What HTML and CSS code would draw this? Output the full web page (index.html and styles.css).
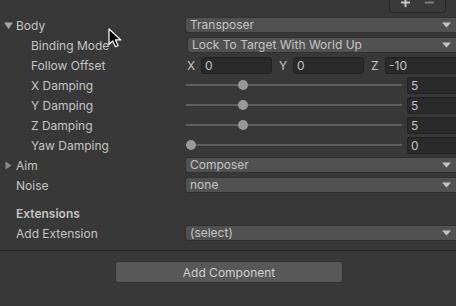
FILE: index.html
```html
<!DOCTYPE html>
<html lang="en">
<head>
  <meta charset="UTF-8" />
  <title>Cinemachine Virtual Camera</title>
  <link rel="stylesheet" href="styles.css">
</head>
<body>
  <div class="inspector">
    <div class="top">
      <div class="plusminus">
        <svg width="11" height="7" viewBox="0 0 11 7"><path d="M1 2.5h9M5.5 0v7" stroke="#c4c4c4" stroke-width="2"/></svg>
        <svg width="11" height="7" viewBox="0 0 11 7"><path d="M1 2.5h9" stroke="#7c7c7c" stroke-width="2"/></svg>
      </div>
    </div>

    <div class="row">
      <div class="label top-label">
        <svg class="fold" width="9" height="9" viewBox="0 0 9 9"><path d="M0 1.5h9L4.5 8z" fill="#a5a5a5"/></svg>
        Body
      </div>
      <div class="field">
        <div class="dropdown">Transposer<svg class="arrow" width="9" height="6" viewBox="0 0 9 6"><path d="M0 0.5h9L4.5 5.5z" fill="#c4c4c4"/></svg></div>
      </div>
    </div>

    <div class="row">
      <div class="label sub">Binding Mode</div>
      <div class="field">
        <div class="dropdown">Lock To Target With World Up<svg class="arrow" width="9" height="6" viewBox="0 0 9 6"><path d="M0 0.5h9L4.5 5.5z" fill="#c4c4c4"/></svg></div>
      </div>
    </div>

    <div class="row">
      <div class="label sub">Follow Offset</div>
      <div class="field vec">
        <div class="axis"><span class="axis-name">X</span><div class="input">0</div></div>
        <div class="axis"><span class="axis-name">Y</span><div class="input">0</div></div>
        <div class="axis"><span class="axis-name">Z</span><div class="input">-10</div></div>
      </div>
    </div>

    <div class="row">
      <div class="label sub">X Damping</div>
      <div class="field">
        <div class="slider"><div class="range"><div class="thumb" style="left: 25%"></div></div></div>
        <div class="input num">5</div>
      </div>
    </div>

    <div class="row">
      <div class="label sub">Y Damping</div>
      <div class="field">
        <div class="slider"><div class="range"><div class="thumb" style="left: 25%"></div></div></div>
        <div class="input num">5</div>
      </div>
    </div>

    <div class="row">
      <div class="label sub">Z Damping</div>
      <div class="field">
        <div class="slider"><div class="range"><div class="thumb" style="left: 25%"></div></div></div>
        <div class="input num">5</div>
      </div>
    </div>

    <div class="row">
      <div class="label sub">Yaw Damping</div>
      <div class="field">
        <div class="slider"><div class="range"><div class="thumb" style="left: 0%"></div></div></div>
        <div class="input num">0</div>
      </div>
    </div>

    <div class="row">
      <div class="label top-label">
        <svg class="fold" width="9" height="9" viewBox="0 0 9 9"><path d="M1.5 0.5v8l6-4z" fill="#8a8a8a"/></svg>
        Aim
      </div>
      <div class="field">
        <div class="dropdown">Composer<svg class="arrow" width="9" height="6" viewBox="0 0 9 6"><path d="M0 0.5h9L4.5 5.5z" fill="#c4c4c4"/></svg></div>
      </div>
    </div>

    <div class="row">
      <div class="label top-label plain">Noise</div>
      <div class="field">
        <div class="dropdown">none<svg class="arrow" width="9" height="6" viewBox="0 0 9 6"><path d="M0 0.5h9L4.5 5.5z" fill="#c4c4c4"/></svg></div>
      </div>
    </div>

    <div class="row section">
      <div class="label top-label plain bold">Extensions</div>
    </div>

    <div class="row">
      <div class="label top-label plain">Add Extension</div>
      <div class="field">
        <div class="dropdown">(select)<svg class="arrow" width="9" height="6" viewBox="0 0 9 6"><path d="M0 0.5h9L4.5 5.5z" fill="#c4c4c4"/></svg></div>
      </div>
    </div>

    <div class="footer">
      <button class="add-btn">Add Component</button>
    </div>
  </div>

  <svg class="cursor" width="14" height="20" viewBox="0 0 14 20">
    <path d="M1 1v15.5l3.8-3.6 2.6 5.8 2.6-1.1-2.6-5.7h5.4z" fill="#000" stroke="#fff" stroke-width="1.2" stroke-linejoin="round"/>
  </svg>
</body>
</html>
```

FILE: styles.css
```css
* {
  margin: 0;
  padding: 0;
  box-sizing: border-box;
}

body {
  width: 456px;
  height: 306px;
  overflow: hidden;
  background: #383838;
  font-family: Inter, 'Liberation Sans', sans-serif;
  font-size: 12px;
  color: #c4c4c4;
  position: relative;
}

.top {
  height: 15px;
  display: flex;
  justify-content: flex-end;
  padding-right: 10px;
}

.plusminus {
  width: 57px;
  height: 13px;
  border: 1px solid #252525;
  border-top: none;
  border-radius: 0 0 4px 4px;
  background: #3a3a3a;
  display: flex;
  justify-content: space-between;
  align-items: flex-start;
  padding: 0 10px 0 10px;
}

.row {
  height: 20px;
  display: flex;
  align-items: center;
}

.label {
  width: 187px;
  flex-shrink: 0;
  white-space: nowrap;
}

.top-label {
  width: 185px;
  display: flex;
  align-items: center;
  padding-left: 4px;
}

.top-label.plain {
  padding-left: 16px;
}

.fold {
  margin-right: 3px;
}

.sub {
  padding-left: 31px;
}

.bold {
  font-weight: 600;
}

.section {
  margin-top: 8px;
}

.field {
  flex: 1;
  display: flex;
  align-items: center;
  min-width: 0;
}

.dropdown {
  flex: 1;
  height: 16px;
  background: #515151;
  border: 1px solid #303030;
  border-right: none;
  border-radius: 3px 0 0 3px;
  display: flex;
  align-items: center;
  justify-content: space-between;
  padding-left: 4px;
  padding-right: 5px;
  line-height: 14px;
}

.arrow {
  flex-shrink: 0;
}

.vec {
  gap: 7px;
}

.axis {
  flex: 1;
  display: flex;
  align-items: center;
}

.axis-name {
  width: 14px;
  flex-shrink: 0;
}

.input {
  flex: 1;
  height: 17px;
  background: #2a2a2a;
  border: 1px solid #212121;
  border-radius: 3px;
  padding-left: 3px;
  line-height: 15px;
}

.axis:last-child .input {
  border-right: none;
  border-radius: 3px 0 0 3px;
}

.slider {
  flex: 1;
  height: 2px;
  background: #5e5e5e;
  margin: 0 5px 0 -1px;
  position: relative;
}

.range {
  position: absolute;
  left: 0;
  right: 10px;
  top: 0;
  height: 2px;
}

.thumb {
  position: absolute;
  top: -4px;
  width: 10px;
  height: 10px;
  border-radius: 50%;
  background: #999999;
}

.num {
  flex: 0 0 49px;
  height: 17px;
  border-right: none;
  border-radius: 3px 0 0 3px;
}

.footer {
  margin-top: 7px;
  border-top: 1px solid #232323;
  padding-top: 10px;
  display: flex;
  padding-left: 115px;
}

.add-btn {
  width: 228px;
  height: 22px;
  background: #585858;
  border: 1px solid #303030;
  border-radius: 3px;
  font-family: inherit;
  font-size: 12px;
  color: #d0d0d0;
}

.cursor {
  position: absolute;
  left: 108px;
  top: 28px;
}
```
